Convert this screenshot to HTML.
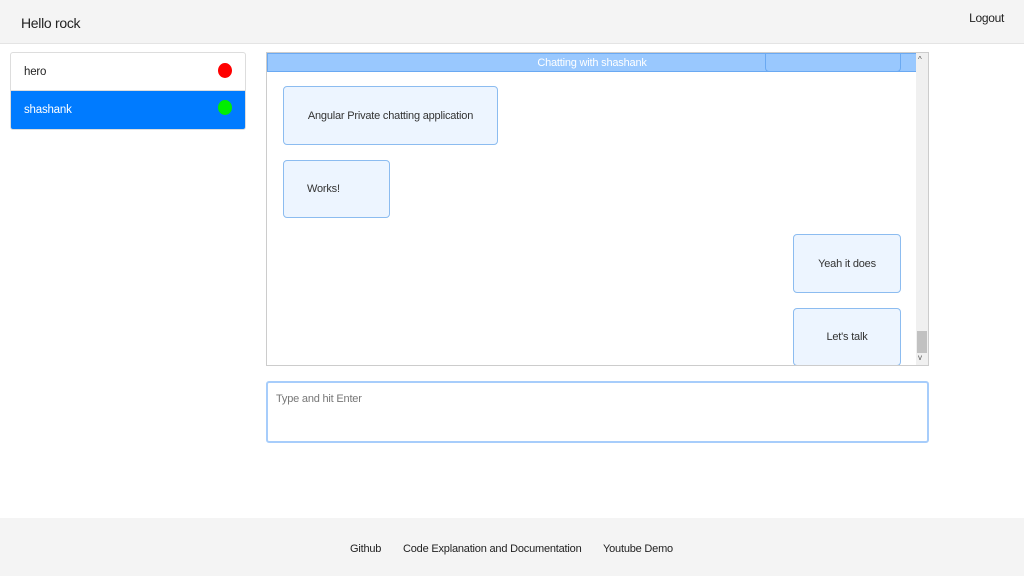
<!DOCTYPE html>
<html><head><style>
*{box-sizing:border-box;margin:0;padding:0}
body{width:1024px;height:576px;position:relative;background:#fff;font-family:"Liberation Sans",sans-serif;color:#222;overflow:hidden}
.hdr{position:absolute;left:0;top:0;width:1024px;height:44px;background:#f4f4f4;border-bottom:1px solid #e4e4e4}
.hdr .t{position:absolute;left:21px;top:15px;font-size:14px;letter-spacing:-0.3px}
.hdr .l{position:absolute;right:20px;top:11px;font-size:12px;letter-spacing:-0.3px}
.list{position:absolute;left:10px;top:52px;width:236px;border:1px solid #ddd;border-radius:3px;overflow:hidden}
.item{height:38px;position:relative;font-size:11.5px;padding:13px 0 0 13px;letter-spacing:-0.2px}
.item.a{background:#007bff;color:#fff}
.dot{position:absolute;right:13px;top:10px;width:14px;height:15px;border-radius:50%}
.chat{position:absolute;left:266px;top:52px;width:663px;height:314px;border:1px solid #ccc;overflow:hidden}
.bar{position:absolute;left:0;top:0;width:650px;height:19px;background:#99c8fe;border:1px solid #6aa9f2;color:#fff;font-size:11px;text-align:center;line-height:18px;letter-spacing:-0.2px}
.bar i{position:absolute;left:497px;top:-1px;width:136px;height:19px;border:1px solid #6aa9f2;border-radius:0 0 4px 4px}
.sb{position:absolute;right:0;top:0;width:12px;height:312px;background:#f0f0f0}
.sb .th{position:absolute;left:1px;top:278px;width:10px;height:22px;background:#c1c1c1}
.sb span{position:absolute;left:2px;font-size:8px;color:#555}
.msg{position:absolute;background:#edf5ff;border:1px solid #8cbcf0;border-radius:4px;font-size:11px;letter-spacing:-0.2px;color:#333;display:flex;align-items:center;justify-content:center}
.in{position:absolute;left:266px;top:381px;width:663px;height:62px;border:2px solid #a7cdfb;border-radius:3px;font-size:11px;letter-spacing:-0.2px;color:#777;padding:10px 8px}
.ft{position:absolute;left:0;top:518px;width:1024px;height:58px;background:#f4f4f4;font-size:11px;letter-spacing:-0.2px}
.ft span{position:absolute;top:25px}
</style></head><body>
<div class="hdr"><span class="t">Hello rock</span><span class="l">Logout</span></div>
<div class="list">
<div class="item" style="border-bottom:1px solid #ddd">hero<span class="dot" style="background:#f00"></span></div>
<div class="item a">shashank<span class="dot" style="background:#0e0;top:9px"></span></div>
</div>
<div class="chat">
<div class="bar">Chatting with shashank<i></i></div>
<div class="sb"><span style="top:2px">^</span><div class="th"></div><span style="top:300px">v</span></div>
<div class="msg" style="left:16px;top:33px;width:215px;height:59px">Angular Private chatting application</div>
<div class="msg" style="left:16px;top:107px;width:107px;height:58px;justify-content:flex-start;padding-left:23px">Works!</div>
<div class="msg" style="left:526px;top:181px;width:108px;height:59px">Yeah it does</div>
<div class="msg" style="left:526px;top:255px;width:108px;height:58px">Let's talk</div>
</div>
<div class="in">Type and hit Enter</div>
<div class="ft"><span style="left:350px">Github</span><span style="left:403px">Code Explanation and Documentation</span><span style="left:603px">Youtube Demo</span></div>
</body></html>
